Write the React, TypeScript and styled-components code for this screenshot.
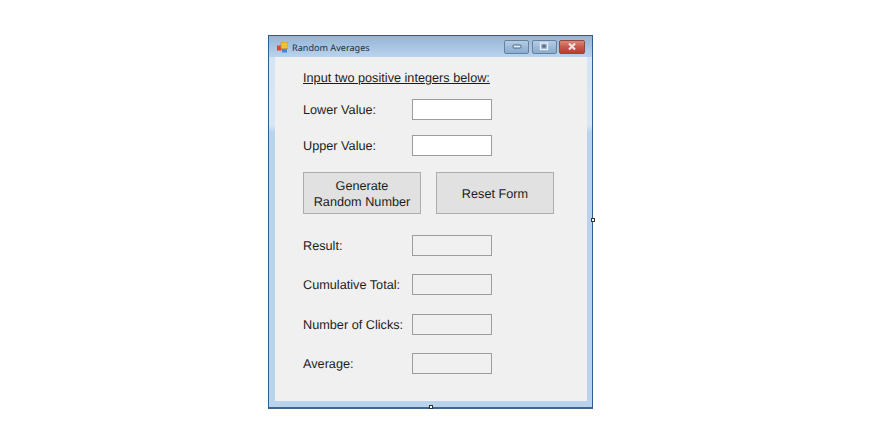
import React from 'react';
import styled, { createGlobalStyle } from 'styled-components';

const GlobalStyle = createGlobalStyle`
  html, body {
    margin: 0;
    background: #fff;
  }
  body {
    font-family: "Liberation Sans", Arial, sans-serif;
    color: #1c1c1c;
    text-rendering: geometricPrecision;
  }
`;

const Page = styled.div`
  width: 870px;
  height: 425px;
  box-sizing: border-box;
  padding: 35px 0 0 268px;
  overflow: hidden;
`;

const Frame = styled.div`
  position: relative;
  width: 325px;
  height: 374px;
  box-sizing: border-box;
  border: 1px solid #2f5f8f;
  border-bottom: 2px solid #3f668c;
  background: linear-gradient(180deg, #d3e3f3 0, #d9e7f5 24%, #b9d3ec 26%, #b9d3ec 100%);
  display: flex;
  flex-direction: column;
`;

const TitleBar = styled.div`
  height: 21px;
  flex: none;
  box-sizing: border-box;
  display: flex;
  align-items: center;
  padding: 2px 7px 0 8px;
  background: linear-gradient(180deg, #94b5d8 0, #a5c2e0 45%, #b9d3ec 100%);
`;

const Title = styled.span`
  font-family: "Noto Sans", "Open Sans", sans-serif;
  font-size: 9.1px;
  color: #20303f;
  margin-left: 4px;
  flex: 1;
`;

const WindowButtons = styled.div`
  display: flex;
  gap: 2.5px;
  margin-top: -2px;
`;

const WindowButton = styled.div<{ $close?: boolean }>`
  width: ${(p) => (p.$close ? 26 : 25)}px;
  height: 14px;
  box-sizing: border-box;
  border: 1px solid ${(p) => (p.$close ? '#8c4a42' : '#67819d')};
  border-radius: 2px;
  display: flex;
  align-items: center;
  justify-content: center;
  background: ${(p) =>
    p.$close
      ? 'linear-gradient(180deg, #d9897c 0, #c9594a 50%, #bb3d2e 100%)'
      : 'linear-gradient(180deg, #b4cde6 0, #9dbbd9 50%, #8caccd 100%)'};
`;

const Client = styled.div`
  flex: 1;
  margin: 0 5px 6px 6px;
  padding: 14px 0 0 28px;
  background: #f0f0f0;
  display: flex;
  flex-direction: column;
`;

const Heading = styled.div`
  font-size: 12.7px;
  line-height: 15px;
  text-decoration: underline;
  margin-bottom: 13px;
`;

const Row = styled.div<{ $gap: number }>`
  display: flex;
  align-items: center;
  height: 21px;
  margin-bottom: ${(p) => p.$gap}px;
`;

const Label = styled.label`
  width: 109px;
  flex: none;
  font-size: 12.7px;
  white-space: nowrap;
`;

const Field = styled.div<{ $readOnly?: boolean }>`
  width: 80px;
  height: 21px;
  box-sizing: border-box;
  border: 1px solid #9c9c9c;
  background: ${(p) => (p.$readOnly ? '#f0f0f0' : '#fff')};
`;

const ButtonRow = styled.div`
  display: flex;
  gap: 15px;
  margin-bottom: 21px;
`;

const FormButton = styled.div`
  width: 118px;
  height: 42px;
  box-sizing: border-box;
  padding-top: 1px;
  border: 1px solid #adadad;
  background: #e1e1e1;
  display: flex;
  align-items: center;
  justify-content: center;
  text-align: center;
  font-size: 12.7px;
  line-height: 16px;
`;

const Handle = styled.div<{ $x: string; $y: string }>`
  position: absolute;
  left: ${(p) => p.$x};
  top: ${(p) => p.$y};
  width: 4px;
  height: 4px;
  box-sizing: border-box;
  border: 1px solid #333;
  background: #fff;
`;

const AppIcon = () => (
  <svg width="11" height="11" viewBox="0 0 11 11">
    <rect x="0" y="3.5" width="4.5" height="5" fill="#d8473a" />
    <rect x="4" y="0" width="7" height="6.5" fill="#f2c037" stroke="#b98a20" strokeWidth="0.6" />
    <rect x="5" y="7" width="5" height="3.5" fill="#4a86d8" />
  </svg>
);

const App: React.FC = () => {
  const results = [
    { label: 'Result:', gap: 18 },
    { label: 'Cumulative Total:', gap: 19 },
    { label: 'Number of Clicks:', gap: 18 },
    { label: 'Average:', gap: 0 },
  ];

  return (
    <>
      <GlobalStyle />
      <Page>
        <Frame>
          <TitleBar>
            <AppIcon />
            <Title>Random Averages</Title>
            <WindowButtons>
              <WindowButton>
                <svg width="10" height="5" viewBox="0 0 10 5">
                  <rect x="1" y="1" width="8" height="3" rx="1" fill="#e8eef5" stroke="#4f6782" />
                </svg>
              </WindowButton>
              <WindowButton>
                <svg width="10" height="9" viewBox="0 0 10 9">
                  <rect x="1.5" y="1" width="7" height="6.5" fill="#8ea9c6" stroke="#e8eef5" strokeWidth="1.4" />
                  <rect x="3.5" y="3" width="3" height="2.5" fill="#4f6782" />
                </svg>
              </WindowButton>
              <WindowButton $close>
                <svg width="10" height="9" viewBox="0 0 10 9">
                  <path d="M2 1.5 L8 7.5 M8 1.5 L2 7.5" stroke="#f0e4e2" strokeWidth="2.2" />
                </svg>
              </WindowButton>
            </WindowButtons>
          </TitleBar>
          <Client>
            <Heading>Input two positive integers below:</Heading>
            <Row $gap={15}>
              <Label>Lower Value:</Label>
              <Field />
            </Row>
            <Row $gap={16}>
              <Label>Upper Value:</Label>
              <Field />
            </Row>
            <ButtonRow>
              <FormButton>
                Generate
                <br />
                Random Number
              </FormButton>
              <FormButton>Reset Form</FormButton>
            </ButtonRow>
            {results.map((r) => (
              <Row key={r.label} $gap={r.gap}>
                <Label>{r.label}</Label>
                <Field $readOnly />
              </Row>
            ))}
          </Client>
          <Handle $x="160px" $y="369px" />
          <Handle $x="322px" $y="182px" />
        </Frame>
      </Page>
    </>
  );
};

export default App;
